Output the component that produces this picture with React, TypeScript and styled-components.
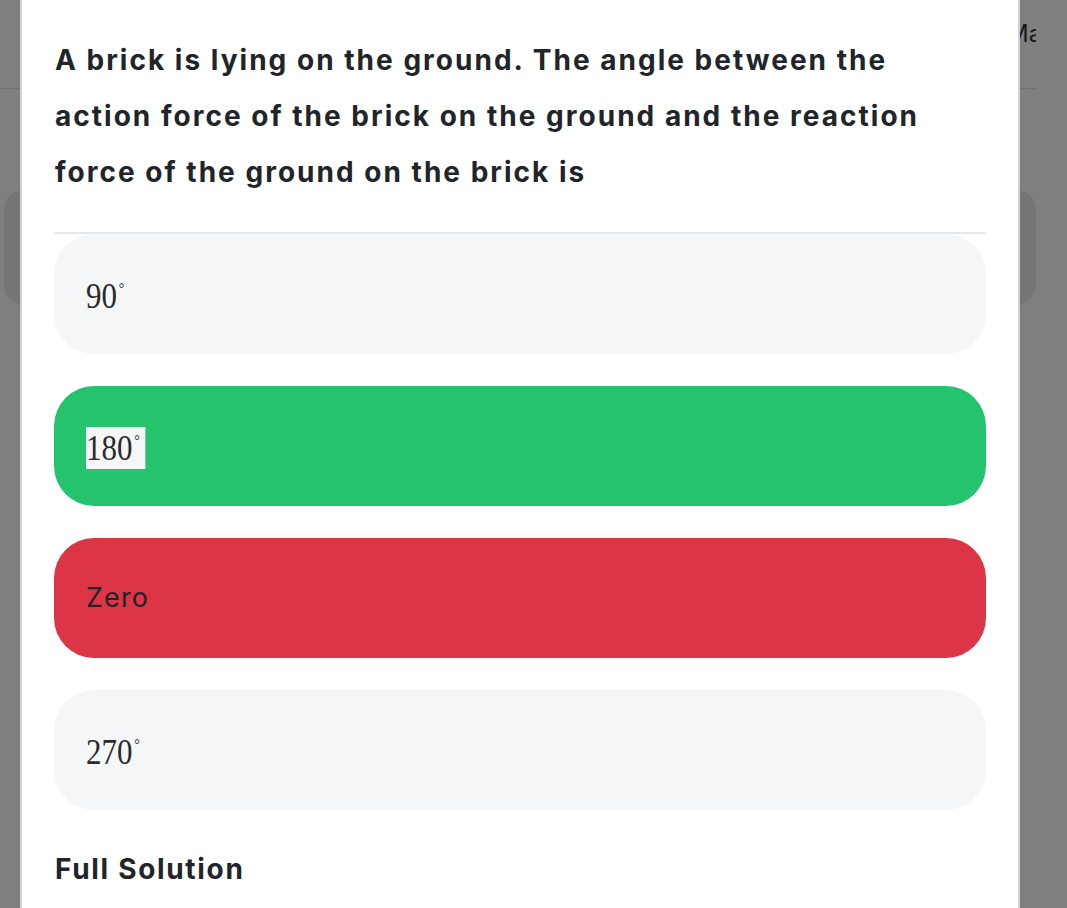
import styled, { createGlobalStyle } from "styled-components";

const GlobalStyle = createGlobalStyle`
  html, body {
    margin: 0;
    padding: 0;
    background: #ffffff;
  }
  * {
    box-sizing: border-box;
  }
`;

type Status = "idle" | "correct" | "wrong";

type Choice = {
  id: string;
  label: string;
  math?: boolean;
  status: Status;
  highlighted?: boolean;
};

const choices: Choice[] = [
  { id: "a", label: "90", math: true, status: "idle" },
  { id: "b", label: "180", math: true, status: "correct", highlighted: true },
  { id: "c", label: "Zero", status: "wrong" },
  { id: "d", label: "270", math: true, status: "idle" },
];

const App = () => {
  return (
    <Page>
      <GlobalStyle />
      <Underlay>
        <Header>
          <Brand />
          <Nav>
            <NavLink>Mathematics</NavLink>
          </Nav>
        </Header>
        <Card />
      </Underlay>
      <Backdrop />
      <Modal>
        <Question>
          A brick is lying on the ground. The angle between the action force
          of the brick on the ground and the reaction force of the ground on
          the brick is
        </Question>
        <Divider />
        <Choices>
          {choices.map((c) => (
            <ChoiceRow key={c.id} status={c.status}>
              {c.math ? (
                <MathText highlighted={c.highlighted}>
                  {c.label}
                  <Degree>°</Degree>
                </MathText>
              ) : (
                <PlainText>{c.label}</PlainText>
              )}
            </ChoiceRow>
          ))}
        </Choices>
        <SolutionTitle>Full Solution</SolutionTitle>
      </Modal>
    </Page>
  );
};

export default App;

const Page = styled.div`
  position: relative;
  width: 1067px;
  height: 908px;
  overflow: hidden;
  background: #ffffff;
`;

const Underlay = styled.div`
  width: 1036px;
  overflow: hidden;
  font-family: "Inter", "Liberation Sans", sans-serif;
`;

const Header = styled.header`
  height: 89px;
  display: flex;
  align-items: flex-start;
  padding-top: 18px;
  border-bottom: 1px solid #e4e4e4;
`;

const Brand = styled.div`
  flex: 0 0 1007px;
`;

const Nav = styled.nav`
  display: flex;
  gap: 24px;
  white-space: nowrap;
`;

const NavLink = styled.span`
  font-size: 24px;
  line-height: 32px;
  color: #333333;
`;

const Card = styled.div`
  margin: 101px 0 0 4px;
  height: 115px;
  border-radius: 20px;
  background: #e9ecef;
`;

const Backdrop = styled.div`
  position: absolute;
  inset: 0;
  background: rgba(0, 0, 0, 0.5);
`;

const Modal = styled.div`
  position: absolute;
  top: 0;
  left: 20px;
  width: 1000px;
  height: 960px;
  background: #ffffff;
  border-left: 2px solid rgba(0, 0, 0, 0.18);
  border-right: 2px solid rgba(0, 0, 0, 0.18);
  padding: 32px 32px 0 32px;
  font-family: "Inter", "Liberation Sans", sans-serif;
  color: #212529;
`;

const Question = styled.h2`
  margin: 0;
  padding-left: 1px;
  max-width: 926px;
  font-size: 28px;
  line-height: 56px;
  font-weight: 700;
  letter-spacing: 0.072em;
`;

const Divider = styled.hr`
  margin: 32px 0 0;
  border: none;
  height: 2px;
  background: #e5e7eb;
`;

const statusColors: Record<Status, string> = {
  idle: "#f5f6f8",
  correct: "#26c36f",
  wrong: "#dc3545",
};

const Choices = styled.div`
  display: flex;
  flex-direction: column;
  gap: 32px;
`;

const ChoiceRow = styled.div<{ status: Status }>`
  height: 120px;
  border-radius: 40px;
  padding: 0 32px;
  display: flex;
  align-items: center;
  background: ${(p) => statusColors[p.status]};
`;

const MathText = styled.span<{ highlighted?: boolean }>`
  display: inline-block;
  font-family: "Liberation Serif", "Times New Roman", serif;
  font-size: 36px;
  line-height: 42px;
  color: #2b2b2b;
  padding-right: 7px;
  transform: scaleX(0.86);
  transform-origin: left center;
  margin-top: 4px;
  background: ${(p) => (p.highlighted ? "#f5f6f8" : "transparent")};
`;

const Degree = styled.sup`
  font-size: 16px;
  margin-left: 2px;
  vertical-align: 14px;
  line-height: 0;
`;

const PlainText = styled.span`
  font-size: 27px;
  line-height: 40px;
  font-weight: 400;
  letter-spacing: 0.04em;
  color: #212529;
`;

const SolutionTitle = styled.h3`
  margin: 39px 0 0;
  padding-left: 1px;
  font-size: 28px;
  line-height: 40px;
  font-weight: 700;
  letter-spacing: 0.06em;
  color: #212529;
`;
